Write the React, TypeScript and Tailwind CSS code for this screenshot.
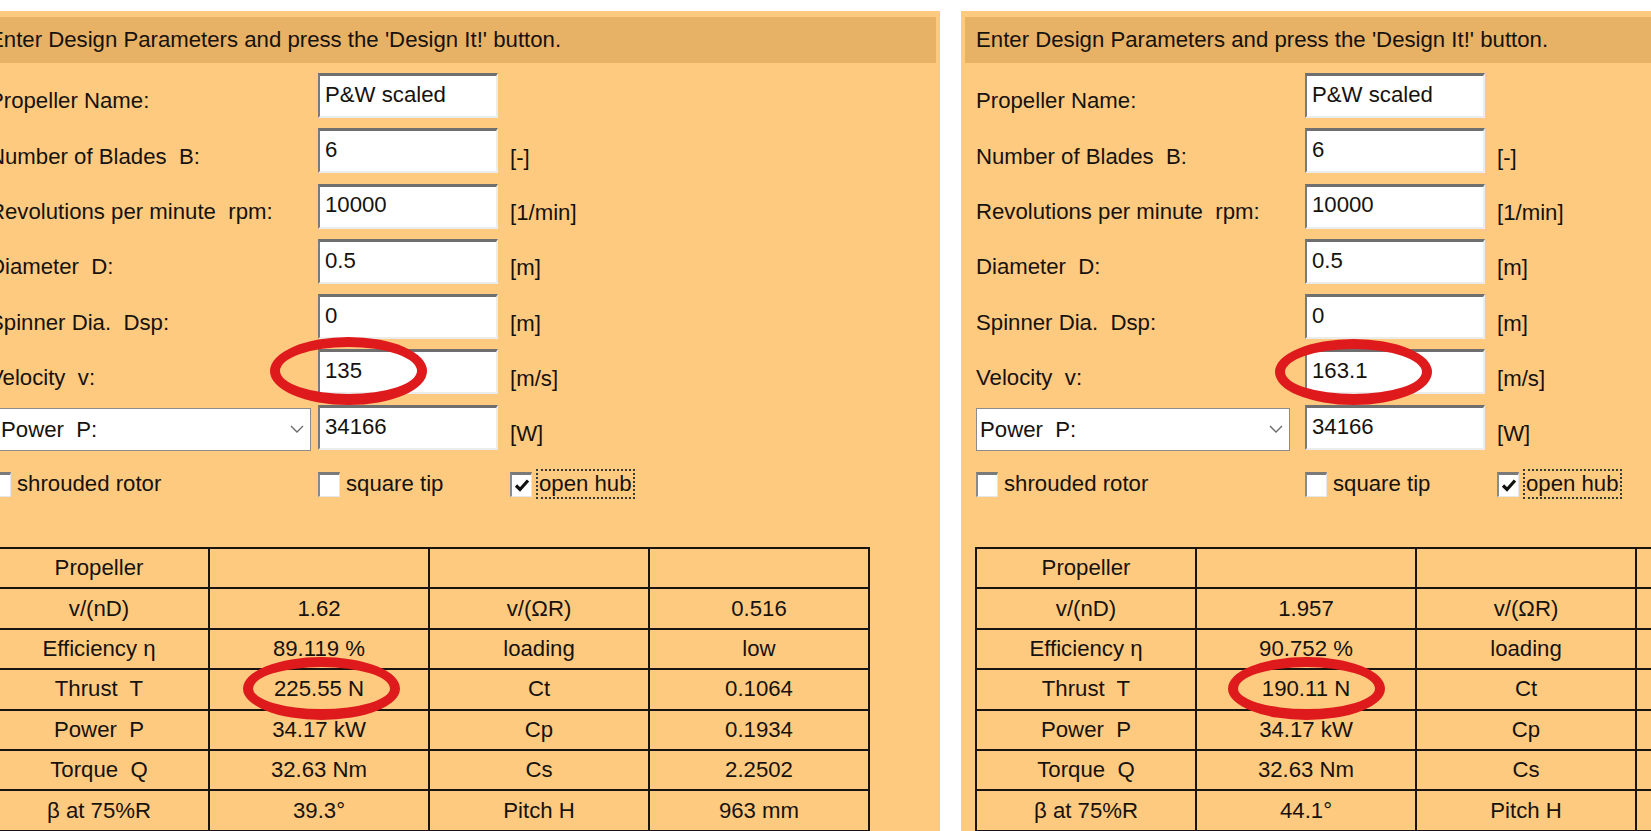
import React from "react"

type PanelData = {
  name: string
  blades: string
  rpm: string
  diameter: string
  spinner: string
  velocity: string
  power: string
  table: string[][]
}

const left: PanelData = {
  name: "P&W scaled",
  blades: "6",
  rpm: "10000",
  diameter: "0.5",
  spinner: "0",
  velocity: "135",
  power: "34166",
  table: [
    ["Propeller", "", "", ""],
    ["v/(nD)", "1.62", "v/(ΩR)", "0.516"],
    ["Efficiency η", "89.119 %", "loading", "low"],
    ["Thrust  T", "225.55 N", "Ct", "0.1064"],
    ["Power  P", "34.17 kW", "Cp", "0.1934"],
    ["Torque  Q", "32.63 Nm", "Cs", "2.2502"],
    ["β at 75%R", "39.3°", "Pitch H", "963 mm"],
  ],
}

const right: PanelData = {
  ...left,
  velocity: "163.1",
  table: [
    ["Propeller", "", "", ""],
    ["v/(nD)", "1.957", "v/(ΩR)", "0.623"],
    ["Efficiency η", "90.752 %", "loading", "low"],
    ["Thrust  T", "190.11 N", "Ct", "0.0613"],
    ["Power  P", "34.17 kW", "Cp", "0.1934"],
    ["Torque  Q", "32.63 Nm", "Cs", "2.3934"],
    ["β at 75%R", "44.1°", "Pitch H", "1102 mm"],
  ],
}

function Field({ value }: { value: string }) {
  return (
    <div className="w-[180px] h-[45px] shrink-0 bg-white border-t-[3px] border-l-2 border-t-[#6f6f6f] border-l-[#7a7a7a] border-r-2 border-b-2 border-r-[#ececec] border-b-[#ececec] flex items-center pl-[5px] pb-[3px]">
      {value}
    </div>
  )
}

function Check({ checked = false }: { checked?: boolean }) {
  return (
    <div className="w-[22px] h-[25px] shrink-0 bg-white border-t-[3px] border-l-2 border-t-[#7a7a7a] border-l-[#8a8a8a] border-r border-b border-r-[#e6e6e6] border-b-[#e6e6e6] flex items-center justify-center">
      {checked ? (
        <svg width="16" height="14" viewBox="0 0 16 14">
          <path d="M2 7.5 L6 11.5 L14 2.5" fill="none" stroke="#111" strokeWidth="3.2" />
        </svg>
      ) : null}
    </div>
  )
}

function Row({ label, value, unit }: { label: string; value: string; unit?: string }) {
  return (
    <div className="flex items-start h-[55.3px]">
      <div className="w-[329px] shrink-0 h-[56px] flex items-center whitespace-pre">{label}</div>
      <Field value={value} />
      <div className="ml-[12px] h-[58px] flex items-center">{unit}</div>
    </div>
  )
}

function Panel({ d, selectShift }: { d: PanelData; selectShift: string }) {
  return (
    <div className="w-[966px] h-[840px] shrink-0 bg-[#FECA80] pt-[6px] text-[22.2px] text-[#16120e]">
      <div className="mx-[4px] h-[46px] bg-[#E7B166] pl-[11px] flex items-center whitespace-pre">
        Enter Design Parameters and press the 'Design It!' button.
      </div>
      <div className="pl-[15px] pt-[10px]">
        <Row label="Propeller Name:" value={d.name} />
        <Row label="Number of Blades  B:" value={d.blades} unit="[-]" />
        <Row label="Revolutions per minute  rpm:" value={d.rpm} unit="[1/min]" />
        <Row label="Diameter  D:" value={d.diameter} unit="[m]" />
        <Row label="Spinner Dia.  Dsp:" value={d.spinner} unit="[m]" />
        <Row label="Velocity  v:" value={d.velocity} unit="[m/s]" />
        <div className="flex items-start h-[55.3px]">
          <div className="w-[329px] shrink-0">
            <div
              className={`${selectShift} mt-[3px] w-[314px] h-[43px] bg-white border border-[#8c8c8c] flex items-center justify-between pl-[3px] pr-[6px] whitespace-pre`}
            >
              <span>Power  P:</span>
              <svg width="14" height="8" viewBox="0 0 14 8">
                <path d="M1 1 L7 7 L13 1" fill="none" stroke="#6b6b6b" strokeWidth="1.4" />
              </svg>
            </div>
          </div>
          <Field value={d.power} />
          <div className="ml-[12px] h-[58px] flex items-center">[W]</div>
        </div>
        <div className="flex items-center h-[48px]">
          <div className="w-[329px] shrink-0 flex items-center gap-[6px]">
            <Check />
            <span>shrouded rotor</span>
          </div>
          <div className="w-[192px] shrink-0 flex items-center gap-[6px]">
            <Check />
            <span>square tip</span>
          </div>
          <div className="flex items-center gap-[4px]">
            <Check checked />
            <span className="border-2 border-dotted border-[#3a3a3a] px-[1px] leading-[26px]">open hub</span>
          </div>
        </div>
        <table className="mt-[39px] ml-[-1px] w-[882px] table-fixed border-collapse">
          <tbody>
            {d.table.map((r, i) => (
              <tr key={i} className="h-[40.4px]">
                {r.map((c, j) => (
                  <td
                    key={j}
                    className="border-2 border-[#1a1410] text-center whitespace-pre p-0 leading-none"
                  >
                    {c}
                  </td>
                ))}
              </tr>
            ))}
          </tbody>
        </table>
      </div>
    </div>
  )
}

function Ring({ cls }: { cls: string }) {
  return (
    <div
      className={`absolute rounded-[50%] border-[10px] border-[#DE1A1C] border-b-[11px] ${cls}`}
    />
  )
}

export default function App() {
  return (
    <div className="relative w-[1651px] h-[831px] overflow-hidden bg-white font-['Liberation_Sans',Arial,sans-serif]">
      <div className="flex pt-[11px] ml-[-26px] gap-[21px]">
        <Panel d={left} selectShift="ml-[8px]" />
        <Panel d={right} selectShift="ml-[0px]" />
      </div>
      <Ring cls="left-[270px] top-[337px] w-[157px] h-[68px]" />
      <Ring cls="left-[243px] top-[657px] w-[157px] h-[63px]" />
      <Ring cls="left-[1275px] top-[339px] w-[157px] h-[66px]" />
      <Ring cls="left-[1228px] top-[657px] w-[157px] h-[63px]" />
    </div>
  )
}
